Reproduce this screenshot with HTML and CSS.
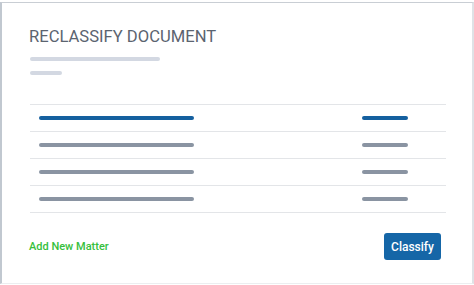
FILE: index.html
```html
<!DOCTYPE html>
<html>
<head>
<meta charset="utf-8">
<link rel="stylesheet" href="styles.css">
</head>
<body>
<div class="card">
  <h1 class="title">RECLASSIFY DOCUMENT</h1>
  <div class="sub sub-long"></div>
  <div class="sub sub-short"></div>
  <div class="list">
    <div class="row active"><span class="bar bar-name"></span><span class="bar bar-val"></span></div>
    <div class="row"><span class="bar bar-name"></span><span class="bar bar-val"></span></div>
    <div class="row"><span class="bar bar-name"></span><span class="bar bar-val"></span></div>
    <div class="row"><span class="bar bar-name"></span><span class="bar bar-val"></span></div>
  </div>
  <div class="footer">
    <a class="add-link">Add New Matter</a>
    <button class="btn">Classify</button>
  </div>
</div>
</body>
</html>
```
FILE: styles.css
```css
html, body {
  margin: 0;
  padding: 0;
  background: #ffffff;
}
body {
  font-family: Roboto, "Liberation Sans", sans-serif;
  width: 474px;
  height: 285px;
  overflow: hidden;
}
.card {
  box-sizing: border-box;
  margin-top: 2px;
  width: 474px;
  height: 282px;
  border-top: 1px solid #c9ced4;
  border-left: 2px solid #c1c8d0;
  border-right: 2px solid #dfe2e6;
  border-bottom: 1px solid #eceef0;
  padding: 24px 31px 0 27px;
  display: flex;
  flex-direction: column;
}
.title {
  margin: 0;
  font-size: 16.6px;
  line-height: 20px;
  font-weight: 400;
  color: #5b6470;
  letter-spacing: 0;
}
.sub {
  height: 4px;
  border-radius: 2px;
  background: #d3d8e2;
  margin-left: 1px;
  margin-top: 10px;
}
.sub-long { width: 130px; }
.sub-short { width: 32px; }
.list {
  margin-top: 29px;
  margin-left: 1px;
  width: 416px;
  border-top: 1px solid #e3e5e8;
}
.row {
  height: 26px;
  border-bottom: 1px solid #e3e5e8;
  display: flex;
  align-items: center;
  justify-content: space-between;
  padding: 0 38px 0 9px;
}
.bar {
  display: block;
  height: 4px;
  border-radius: 2px;
  background: #8a94a2;
}
.bar-name { width: 155px; }
.bar-val { width: 46px; }
.row.active .bar { background: #15609f; }
.footer {
  margin-top: 20px;
  display: flex;
  align-items: center;
  justify-content: space-between;
}
.add-link {
  font-size: 11px;
  font-weight: 500;
  color: #36c03c;
  margin-left: 0;
}
.btn {
  width: 57px;
  height: 27px;
  border: none;
  border-radius: 3px;
  background: #1566a7;
  color: #ffffff;
  font-family: Roboto, "Liberation Sans", sans-serif;
  font-size: 12px;
  font-weight: 500;
  padding: 0;
}
```
